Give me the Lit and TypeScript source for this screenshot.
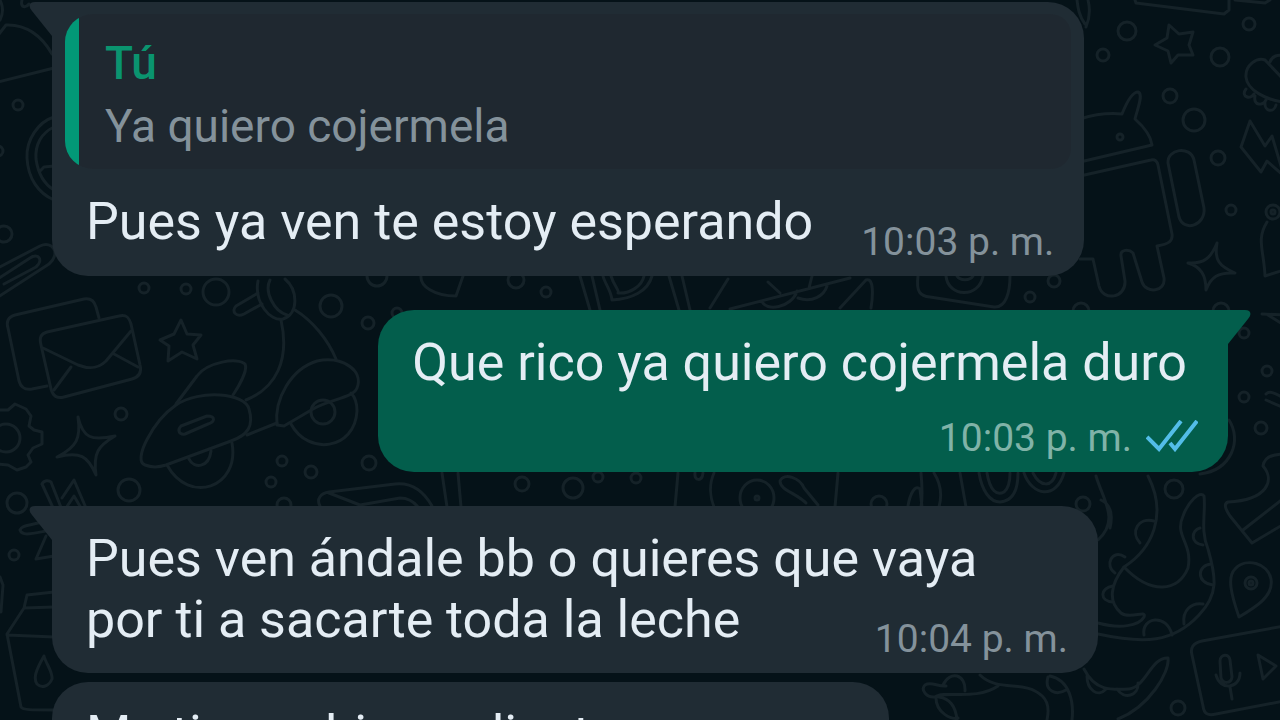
import { LitElement, html, svg, css, nothing } from "lit";
import { customElement, property } from "lit/decorators.js";
import { classMap } from "lit/directives/class-map.js";

interface Message {
  text: string;
  time: string;
  outgoing?: boolean;
  tail?: boolean;
  layout: "row" | "stacked" | "tucked";
  quote?: { author: string; text: string };
}

const messages: Message[] = [
  {
    text: "Pues ya ven te estoy esperando",
    time: "10:03 p. m.",
    tail: true,
    layout: "row",
    quote: { author: "Tú", text: "Ya quiero cojermela" },
  },
  {
    text: "Que rico ya quiero cojermela duro",
    time: "10:03 p. m.",
    outgoing: true,
    tail: true,
    layout: "stacked",
  },
  {
    text: "Pues ven ándale bb o quieres que vaya por ti a sacarte toda la leche",
    time: "10:04 p. m.",
    tail: true,
    layout: "tucked",
  },
  { text: "Me tienes bien caliente", time: "10:04 p. m.", layout: "row" },
];

// Small bubbles scattered over the wallpaper: x, y, radius.
const dots: [number, number, number][] = [
  [1127, 31, 9], [1103, 55, 6], [1220, 57, 9], [1249, 24, 6], [1170, 96, 7],
  [1194, 120, 11], [1218, 158, 7], [1231, 210, 5], [1054, 281, 6], [1030, 297, 5],
  [1081, 311, 8], [1221, 311, 8], [18, 105, 5], [-2, 151, 5], [4, 234, 8],
  [144, 288, 5], [186, 289, 5], [216, 292, 13], [331, 306, 11], [368, 323, 6],
  [377, 276, 10], [121, 414, 6], [129, 490, 11], [282, 461, 5], [311, 472, 6],
  [271, 482, 5], [369, 463, 7], [284, 505, 7], [17, 503, 10], [14, 555, 5],
  [516, 280, 8], [546, 292, 5], [397, 313, 5], [522, 484, 7], [573, 488, 10],
  [598, 477, 5], [636, 478, 5], [1267, 371, 5], [1244, 397, 5], [1244, 333, 5],
  [1261, 428, 6], [1174, 489, 9], [1083, 504, 7], [879, 504, 8], [1178, 708, 7],
  [1251, 583, 6], [1273, 212, 7], [1273, 212, 2],
];

const wallpaper = svg`
  ${dots.map(([x, y, r]) => svg`<circle cx=${x} cy=${y} r=${r} />`)}

  <!-- left edge: globe, clock, paper clip -->
  <path d="M-4 38 L6 25 C26 24 42 36 52 54 M-2 82 L54 68 M0 0 C3 6 4 12 0 20 M22 0 C20 8 26 8 29 4" />
  <path d="M54 117 C38 122 26 140 27 158 C28 178 38 193 54 200 M54 127 C41 133 35 145 36 159 C38 173 44 184 54 190 M40 171 L44 167 L54 166" />
  <path d="M-6 270 L40 246 C53 240 61 254 49 264 L-2 297 M-4 280 L30 258 C38 252 44 260 36 267 L4 284" />

  <!-- envelopes -->
  <path d="M99 318 L96 307 C94 300 90 298 84 299 L15 315 C8 317 6 322 8 328 L19 381 C21 388 25 390 32 389 L47 386" />
  <path d="M47 332 L119 316 C126 314 129 317 131 324 L140 365 C142 373 139 377 132 379 L64 397 C57 399 53 396 51 389 L41 345 C39 337 41 334 47 332 Z" />
  <path d="M43 348 L78 365 C91 370 99 368 106 361 L131 331 M114 354 L138 367 M71 367 L54 390" />

  <!-- stars and sparkles -->
  <path d="M181 320 L187 334 L201 335 L193 345 L197 359 L182 352 L168 361 L169 346 L160 340 L174 334 Z" />
  <path d="M78 417 C83 438 91 441 115 436 C98 446 93 453 96 475 C88 456 80 451 57 457 C77 447 81 438 78 417 Z" />
  <path d="M1169 25 L1179 34 L1193 32 L1189 45 L1193 55 L1178 55 L1171 63 L1168 51 L1155 45 L1167 38 Z" />
  <path d="M1217 243 C1214 260 1219 266 1235 273 C1218 272 1211 277 1206 290 C1206 275 1201 267 1188 263 C1204 264 1211 258 1217 243 Z" />

  <!-- gear -->
  <circle cx="6" cy="438" r="14" />
  <path d="M-2 410 L8 410 L15 404 L26 409 L31 416 L29 426 L34 430 L42 432 L42 444 L33 448 L28 455 L31 462 L26 467 L17 470 L8 465 L-2 464" />

  <!-- scooter -->
  <path d="M258 293 L236 306 C231 311 236 318 244 314 L262 304 M258 281 C254 302 270 322 283 319 C299 314 298 290 285 279 M270 280 C264 292 274 311 287 315" />
  <path d="M281 320 C290 360 276 388 246 400 M295 310 C313 321 328 340 336 359" />
  <path d="M176 404 L197 376 C207 362 238 357 245 364 C248 370 239 386 233 395" />
  <path d="M145 465 C132 461 153 421 176 405 C200 389 245 393 249 409 C254 426 248 435 231 441 L166 465 C157 468 150 467 145 465 Z" />
  <path d="M181 426 L207 416 C216 416 215 422 208 424 L185 434 C179 435 177 430 181 426 Z" />
  <path d="M167 465 C189 505 240 488 232 443 M189 459 C194 469 209 468 211 451 M247 435 L277 423" />
  <path d="M277 425 C274 399 291 369 317 361 C342 356 364 370 357 388 C353 398 330 399 313 409 L284 426 Z" />
  <path d="M291 424 C308 456 355 450 357 411 C357 402 355 397 351 393" />
  <circle cx="323" cy="412" r="12" />

  <!-- strip below the envelopes and scooter -->
  <path d="M42 484 L54 510 M51 482 L62 510 M42 484 C44 480 49 480 51 482 M62 498 L74 480 L86 508 M66 508 L74 496 L81 508" />
  <path d="M20 530 C22 525 28 526 42 522 M20 530 C22 536 30 534 46 531 M46 536 L36 559 L54 556" />
  <path d="M320 506 C316 499 321 493 329 492 L395 484 C413 482 424 492 432 506 M329 493 L360 505 L400 498 C408 498 414 502 418 507 M442 473 L447 507 M458 473 L461 507" />
  <path d="M678 473 L675 507 M695 473 C694 481 702 482 703 473 M714 473 C709 484 710 497 714 507 M838 473 L835 507" />
  <ellipse cx="757" cy="498" rx="17" ry="18" /><circle cx="757" cy="498" r="2" />
  <path d="M780 481 C784 472 800 478 804 488 L818 505 M780 481 C780 490 796 493 806 503" />
  <path d="M908 506 C910 494 915 484 920 489 L922 507 M921 473 C922 484 923 496 921 507 M934 473 C941 484 942 496 939 507 M960 473 L966 507 M979 473 C982 491 990 502 1000 502 C1013 501 1018 490 1018 473 M987 473 C990 491 997 496 1004 492 C1009 488 1010 480 1010 473 M1024 473 C1032 496 1056 500 1064 473 M1033 473 C1040 487 1052 488 1056 473" />

  <!-- strip between the first two bubbles -->
  <path d="M421 276 C420 286 434 296 456 296 L463 276 M580 276 L590 310 M592 276 L600 310 M603 276 C605 284 611 290 612 300 C632 299 648 291 652 276 M611 276 C614 286 620 291 618 293 C630 294 642 286 644 276 M669 276 L679 310 M682 276 L690 310 M728 279 L710 308 M768 282 L780 293 M730 309 L850 278 M812 276 L809 288 M762 301 C765 312 792 308 797 291 M798 298 C812 303 824 296 827 286 M840 308 L866 280 C874 277 873 296 871 308" />
  <path d="M918 276 C916 292 920 296 930 297 L994 307 C1006 308 1010 292 1010 276 M946 276 C948 297 979 299 983 276 M957 276 C960 281 970 281 973 276" />

  <!-- robot -->
  <path d="M1080 119 C1099 113 1111 113 1122 114 C1126 104 1132 92 1138 92 C1144 94 1137 110 1135 119 C1144 127 1151 137 1152 145 L1080 162 M1080 176 L1151 160 C1155 159 1157 161 1158 165 L1172 234 C1173 241 1169 244 1157 246 L1164 278 C1166 292 1146 294 1142 282 L1133 253 C1129 249 1120 249 1121 256 L1125 281 C1126 298 1103 302 1099 286 L1093 259 L1080 259" />
  <path d="M1168 163 C1167 149 1190 145 1194 160 L1204 208 C1206 225 1184 233 1179 217 Z" />
  <circle cx="1120" cy="137" r="3" />

  <!-- upper right corner -->
  <path d="M1135 0 L1136 3 L1224 14 L1229 10 L1229 0 M1235 0 L1265 3 L1270 0 M1077 0 C1078 8 1079 16 1085 24 M1088 0 C1091 12 1089 20 1086 27" />
  <path d="M1284 102 C1266 100 1247 90 1246 77 C1245 65 1257 57 1265 60 L1284 80 M1270 62 C1272 56 1278 54 1284 56 M1246 89 C1240 97 1251 100 1254 94 M1255 96 C1253 106 1263 106 1266 100 M1265 102 C1264 112 1274 113 1276 105" />
  <path d="M1250 121 L1265 146 L1272 136 L1284 176 L1267 161 L1261 172 L1241 147 Z" />
  <path d="M1267 222 C1256 240 1264 250 1265 276 L1284 270" />
  <path d="M1262 314 L1284 315 M1268 315 L1284 325 M1266 394 C1270 390 1276 394 1284 398 M1266 400 L1284 408" />
  <path d="M1229 420 C1242 440 1232 470 1200 474" />

  <!-- lower right: octopus, horn, pin, recorder -->
  <path d="M1284 454 C1270 454 1264 459 1263 466 C1275 480 1268 500 1228 502 C1223 504 1226 510 1230 516 L1252 543 L1284 524 M1243 530 L1284 498" />
  <path d="M1239 617 C1231 594 1227 577 1235 569 C1246 557 1268 563 1271 579 C1274 596 1256 607 1239 617 Z" />
  <path d="M1096 476 C1103 500 1120 520 1098 540 M1101 500 C1112 505 1113 515 1110 528 M1148 476 C1168 515 1152 549 1124 567 C1110 585 1108 602 1121 613 C1130 620 1147 609 1144 617 C1139 626 1120 629 1098 623" />
  <path d="M1124 567 C1151 595 1178 592 1188 568 C1193 543 1174 536 1183 516 C1188 502 1200 490 1204 496 C1206 512 1200 530 1208 549 C1216 577 1219 594 1199 615 C1173 643 1144 644 1098 634" />
  <path d="M1154 521 C1138 517 1130 532 1140 543 M1125 557 C1112 548 1104 566 1115 573 M1113 586 C1100 588 1099 601 1113 602 M1144 635 C1141 617 1167 613 1172 635 M1184 624 C1182 610 1192 602 1203 604 M1213 585 C1196 583 1197 565 1211 564 M1203 545 C1190 544 1191 530 1200 528" />
  <path d="M1084 669 C1095 691 1111 690 1129 689 C1146 687 1151 657 1168 658 C1170 672 1149 707 1118 719 M1087 676 C1087 690 1098 698 1106 689 M1117 689 C1124 700 1139 696 1138 683" />
  <path d="M980 675 C996 691 1020 682 1035 691 C1047 697 1050 706 1047 720 M998 686 C976 701 945 690 935 697 C927 698 920 690 925 685 C931 681 938 687 946 686 M943 685 C950 670 966 674 965 691 M936 698 C936 713 952 720 958 718 M939 697 C952 699 956 709 957 720 M1048 677 C1044 691 1056 696 1066 690 M1050 676 C1070 680 1074 703 1072 720" />
  <path d="M1284 626 L1202 641 C1193 643 1190 648 1192 655 L1203 706 C1204 714 1208 716 1216 714 L1284 701 M1220 661 C1220 654 1229 653 1230 660 L1232 677 C1231 684 1223 684 1221 678 Z M1216 675 C1220 691 1240 689 1240 673 M1230 687 L1232 699 M1258 655 L1276 666 L1263 679 Z" />

  <!-- milk carton -->
  <path d="M54 592 L27 595 L24 608 L54 607 M24 608 L7 634 L21 707 C23 710 30 710 54 710 M7 635 L54 637 M44 656 C36 670 33 678 37 684 C42 689 49 686 52 679 C53 672 46 664 44 656 Z M0 577 L3 585 L1 612" />
  <circle cx="1251" cy="583" r="2" />
`;

@customElement("chat-bubble")
class ChatBubble extends LitElement {
  @property({ attribute: false }) message!: Message;

  static styles = css`
    :host {
      display: flex;
    }
    .bubble {
      position: relative;
      box-sizing: border-box;
      max-width: 1046px;
      padding: 0 13px 10px;
      border-radius: 36px;
      background: #202c34;
      color: #e4edf4;
    }
    .bubble.outgoing {
      margin-left: auto;
      background: #035e4c;
    }
    .bubble.tail {
      border-top-left-radius: 0;
    }
    .bubble.outgoing.tail {
      border-top-left-radius: 36px;
      border-top-right-radius: 0;
    }
    .tip {
      position: absolute;
      top: 0;
      right: calc(100% - 1px);
      width: 24px;
      height: 34px;
      fill: #202c34;
    }
    .outgoing .tip {
      right: auto;
      left: calc(100% - 1px);
      fill: #035e4c;
      transform: scaleX(-1);
    }
    .quote {
      margin: 0;
      padding: 18px 40px 11px;
      border-radius: 28px 20px 20px 28px;
      background: linear-gradient(to right, #029877 14px, #1f2830 14px);
      font-size: 46px;
      line-height: 63px;
      color: #84929b;
    }
    .spaced {
      padding-top: 12px;
    }
    .author {
      display: block;
      font-weight: 500;
      color: #0a946f;
    }
    .quote p {
      margin: 0;
    }
    .body {
      display: flex;
      flex-direction: column;
      padding: 22px 17px 0 21px;
    }
    .text {
      margin: 0;
      padding-right: 11px;
      font-size: 52px;
      line-height: 61px;
    }
    .meta {
      display: flex;
      align-items: center;
      gap: 14px;
      align-self: flex-end;
      margin-top: 22px;
      font-size: 39px;
      line-height: 47px;
      color: #84929b;
      white-space: nowrap;
    }
    .outgoing .meta {
      color: #80b3a8;
    }
    .row .body {
      flex-direction: row;
      justify-content: space-between;
      gap: 37px;
    }
    .row .text {
      padding-bottom: 14px;
    }
    .row .meta {
      margin-top: 0;
    }
    .tucked .text {
      display: flow-root;
    }
    .tucked .meta {
      float: right;
      margin: 27px -11px 0 0;
    }
    .ticks {
      width: 52px;
      height: 32px;
      margin-bottom: 5px;
      fill: none;
      stroke: #53bde8;
      stroke-width: 4;
    }
  `;

  render() {
    const m = this.message;
    const meta = html`<span class="meta">
      <time>${m.time}</time>
      ${m.outgoing
        ? html`<svg class="ticks" viewBox="0 0 52 32" role="img" aria-label="Leído">
            <path d="M1 17 L13 29 L35 1 M24 23 L29 29 L51 1" />
          </svg>`
        : nothing}
    </span>`;
    const tucked = m.layout === "tucked";
    return html`
      <article
        class=${classMap({ bubble: true, outgoing: !!m.outgoing, tail: !!m.tail, spaced: !!m.quote, [m.layout]: true })}
      >
        ${m.tail
          ? html`<svg class="tip" viewBox="0 0 24 34" aria-hidden="true">
              <path d="M24 0 H6 C0 0 -1 4 3 9 L23 34 H24 Z" />
            </svg>`
          : nothing}
        ${m.quote
          ? html`<blockquote class="quote">
              <span class="author">${m.quote.author}</span>
              <p>${m.quote.text}</p>
            </blockquote>`
          : nothing}
        <div class="body">
          <p class="text">${m.text}${tucked ? meta : nothing}</p>
          ${tucked ? nothing : meta}
        </div>
      </article>
    `;
  }
}

@customElement("app-root")
class AppRoot extends LitElement {
  static styles = css`
    :host {
      display: block;
      position: relative;
      height: 100vh;
      overflow: hidden;
      background: #051218;
      font-family: Roboto, "Liberation Sans", sans-serif;
    }
    .wallpaper {
      position: absolute;
      inset: 0;
      width: 100%;
      height: 100%;
      fill: none;
      stroke: #152228;
      stroke-width: 3;
      stroke-linejoin: round;
      stroke-linecap: round;
    }
    .thread {
      position: relative;
      display: flex;
      flex-direction: column;
      gap: 34px;
      padding: 2px 52px 0;
    }
    .thread .follow {
      margin-top: -25px;
    }
  `;

  render() {
    return html`
      <svg class="wallpaper" viewBox="0 0 1280 720" preserveAspectRatio="xMidYMid slice" aria-hidden="true">
        ${wallpaper}
      </svg>
      <main class="thread">
        ${messages.map(
          (m) => html`<chat-bubble class=${m.tail ? "lead" : "follow"} .message=${m}></chat-bubble>`,
        )}
      </main>
    `;
  }
}
